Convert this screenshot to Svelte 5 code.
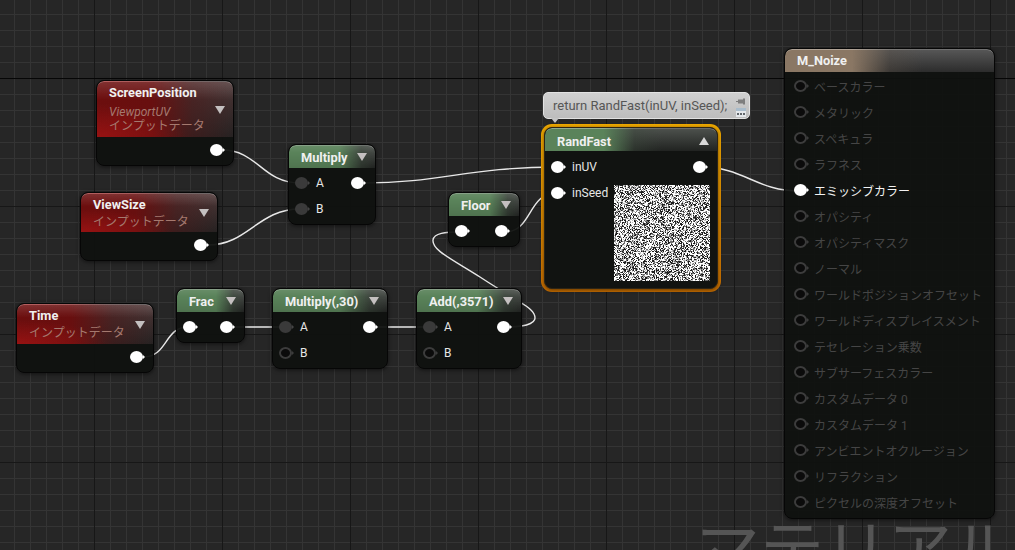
<script>
  import { onMount } from 'svelte';

  const inputData = 'インプットデータ';
  const nodes = [
    { title: 'ScreenPosition', kind: 'red', sub: ['ViewportUV'], note: inputData, x: 96, y: 80, w: 138, h: 86, head: 56, rows: [{ out: 'on' }] },
    { title: 'ViewSize', kind: 'red', note: inputData, x: 80, y: 192, w: 138, h: 69, head: 39, rows: [{ out: 'on' }] },
    { title: 'Time', kind: 'red', note: inputData, x: 16, y: 303, w: 138, h: 70, head: 40, rows: [{ out: 'on' }] },
    { title: 'Multiply', kind: 'green', x: 288, y: 144, w: 88, h: 81, head: 23, rows: [{ pin: 'dim', label: 'A', out: 'on' }, { pin: 'dim', label: 'B' }] },
    { title: 'Frac', kind: 'green', x: 176, y: 288, w: 69, h: 55, head: 23, rows: [{ pin: 'on', out: 'on' }] },
    { title: 'Multiply(,30)', kind: 'green', x: 272, y: 288, w: 116, h: 81, head: 23, rows: [{ pin: 'dim', label: 'A', out: 'on' }, { pin: 'off', label: 'B' }] },
    { title: 'Add(,3571)', kind: 'green', x: 416, y: 288, w: 106, h: 81, head: 23, rows: [{ pin: 'dim', label: 'A', out: 'on' }, { pin: 'off', label: 'B' }] },
    { title: 'Floor', kind: 'green', x: 448, y: 192, w: 72, h: 55, head: 23, rows: [{ pin: 'on', out: 'on' }] }
  ];

  const outputs = [
    'ベースカラー', 'メタリック', 'スペキュラ', 'ラフネス', 'エミッシブカラー', 'オパシティ',
    'オパシティマスク', 'ノーマル', 'ワールドポジションオフセット', 'ワールドディスプレイスメント',
    'テセレーション乗数', 'サブサーフェスカラー', 'カスタムデータ 0', 'カスタムデータ 1',
    'アンビエントオクルージョン', 'リフラクション', 'ピクセルの深度オフセット'
  ];

  const wires = [
    'M222 150 C258 150 262 183 300 183',
    'M208 245 C248 245 258 209 300 209',
    'M364 183 C440 183 470 167 556 167',
    'M143 357 C168 357 164 327 188 327',
    'M233 327 L285 327',
    'M376 327 L429 327',
    'M505 327 C530 327 538 322 534 314 C530 306 515 300 480 277 C450 258 432 250 433 240 C434 233 445 232 461 232',
    'M505 232 C532 232 528 193 556 193',
    'M700 167 C745 167 755 191 800 191'
  ];

  let noise;
  onMount(() => {
    const ctx = noise.getContext('2d');
    const img = ctx.createImageData(96, 96);
    let s = 1234567;
    const rnd = () => {
      s = (s + 0x6d2b79f5) | 0;
      let t = Math.imul(s ^ (s >>> 15), 1 | s);
      t = (t + Math.imul(t ^ (t >>> 7), 61 | t)) ^ t;
      return ((t ^ (t >>> 14)) >>> 0) / 4294967296;
    };
    for (let i = 0; i < img.data.length; i += 4) {
      const r = rnd();
      const v = r < 0.24 ? 30 : r < 0.44 ? 110 : r < 0.6 ? 190 : 255;
      img.data[i] = img.data[i + 1] = img.data[i + 2] = v;
      img.data[i + 3] = 255;
    }
    ctx.putImageData(img, 0, 0);
  });
</script>

{#snippet pin(state)}
  <span class="pin {state}"><i></i></span>
{/snippet}

<main class="graph">
  <svg class="wires" width="1015" height="550" viewBox="0 0 1015 550" aria-hidden="true">
    {#each wires as d}
      <path {d} />
    {/each}
  </svg>

  {#each nodes as n}
    <section class="node" style="left:{n.x}px;top:{n.y}px;width:{n.w}px;height:{n.h}px">
      <header class="head {n.kind}" style="height:{n.head}px">
        <div class="titles">
          <strong>{n.title}</strong>
          {#if n.sub}<em>{n.sub[0]}</em>{/if}
          {#if n.note}<span class="note">{n.note}</span>{/if}
        </div>
        <b class="arrow"></b>
      </header>
      <div class="body {n.kind}">
        {#each n.rows as r}
          <div class="row">
            <div class="in">
              {#if r.pin}{@render pin(r.pin)}{/if}
              {#if r.label}<span class="label">{r.label}</span>{/if}
            </div>
            {#if r.out}{@render pin(r.out)}{/if}
          </div>
        {/each}
      </div>
    </section>
  {/each}

  <div class="comment">
    <span>return RandFast(inUV, inSeed);</span>
    <svg class="cicons" width="10" height="24" viewBox="0 0 10 24" aria-hidden="true">
      <path d="M0 7H2V8H0Z M2 5.5H7V9.5H2Z M7 4.5H9V10.5H7Z" fill="#7e7e7e" />
      <rect x="0" y="14" width="10" height="9" fill="#e4e7ea" />
      <rect x="0" y="14" width="10" height="3" fill="#a9bccb" />
      <path d="M1 20H3M4 20H6M7 20H9" stroke="#62676b" stroke-width="2" />
    </svg>
    <b class="tail"></b>
  </div>

  <div class="selected">
    <section class="node inner">
      <header class="head green wide">
        <div class="titles"><strong>RandFast</strong></div>
        <b class="arrow up"></b>
      </header>
      <div class="body">
        <div class="row">
          <div class="in">{@render pin('on')}<span class="label">inUV</span></div>
          {@render pin('on')}
        </div>
        <div class="preview-row">
          <div class="in row">{@render pin('on')}<span class="label">inSeed</span></div>
          <canvas bind:this={noise} width="96" height="96"></canvas>
        </div>
      </div>
    </section>
  </div>

  <section class="node result">
    <header class="head tan">
      <div class="titles"><strong>M_Noize</strong></div>
    </header>
    <div class="body list">
      {#each outputs as o, i}
        <div class="row">
          <div class="in">
            {@render pin(i === 4 ? 'on' : 'off')}
            <span class="label jp" class:active={i === 4}>{o}</span>
          </div>
        </div>
      {/each}
    </div>
  </section>

  <div class="watermark">マテリアル</div>
</main>

<style>
  :global(body) {
    margin: 0;
  }
  .graph {
    position: relative;
    width: 1015px;
    height: 550px;
    overflow: hidden;
    font-family: Roboto, "Noto Sans CJK JP", sans-serif;
    background-color: #262626;
    background-image:
      linear-gradient(180deg, #060606 1px, transparent 1px),
      linear-gradient(90deg, #171717 1px, transparent 1px),
      linear-gradient(180deg, #171717 1px, transparent 1px),
      linear-gradient(90deg, #343434 1px, transparent 1px),
      linear-gradient(180deg, #343434 1px, transparent 1px);
    background-size: 100% 1px, 128px 128px, 128px 128px, 16px 16px, 16px 16px;
    background-position: 0 78px, 94px 0, 0 78px, 14px 0, 0 14px;
    background-repeat: no-repeat, repeat, repeat, repeat, repeat;
  }
  .wires {
    position: absolute;
    inset: 0;
  }
  .wires path {
    fill: none;
    stroke: #e8e8e8;
    stroke-width: 1.4;
  }
  .node {
    position: absolute;
    box-sizing: border-box;
    display: flex;
    flex-direction: column;
    border: 1px solid #060606;
    border-radius: 8px;
    background: rgba(15, 17, 15, 0.95);
    box-shadow: 0 1px 4px rgba(0, 0, 0, 0.55);
    overflow: hidden;
  }
  .head {
    flex: none;
    display: flex;
    align-items: center;
    justify-content: space-between;
    box-sizing: border-box;
    padding: 0 8px 0 12px;
    border-top: 1px solid rgba(255, 255, 255, 0.32);
    border-radius: 7px 7px 0 0;
    color: #f0f0f0;
  }
  .head.red {
    background:
      linear-gradient(180deg, rgba(255, 255, 255, 0.14) 0%, transparent 32%),
      radial-gradient(ellipse 65% 60% at 0% 100%, rgba(165, 20, 20, 0.75) 0%, transparent 100%),
      linear-gradient(90deg, #6c0e0e 0%, #680f0f 40%, rgba(80, 24, 24, 0.5) 70%, transparent 100%),
      linear-gradient(180deg, #4c3636, #262222);
  }
  .head.green {
    background:
      linear-gradient(180deg, rgba(255, 255, 255, 0.08) 0%, transparent 30%, rgba(0, 0, 0, 0.12) 100%),
      linear-gradient(90deg, #5a835a 0%, #5a835a 58%, rgba(60, 75, 60, 0.5) 84%, transparent 100%),
      linear-gradient(180deg, #505450, #242624);
  }
  .head.wide {
    background:
      linear-gradient(90deg, #5a835a 0%, #5a835a 34%, rgba(60, 75, 60, 0.35) 52%, transparent 68%),
      linear-gradient(180deg, #4c504c, #212321);
  }
  .head.tan {
    height: 23px;
    padding-bottom: 2px;
    background:
      linear-gradient(90deg, #8a7764 0%, #8a7764 32%, rgba(90, 80, 70, 0.35) 50%, transparent 66%),
      linear-gradient(180deg, #565656, #2c2c2c);
  }
  .titles {
    display: flex;
    flex-direction: column;
    white-space: nowrap;
  }
  .red .titles {
    gap: 3px;
    padding-bottom: 1px;
  }
  strong {
    font-size: 12.8px;
    font-weight: 700;
    line-height: 15px;
  }
  em {
    margin-top: 2px;
    margin-bottom: -3px;
    font-size: 12px;
    line-height: 14px;
    color: #a5796f;
  }
  .note {
    font-size: 12px;
    line-height: 14px;
    color: #a5796f;
  }
  .arrow {
    flex: none;
    width: 0;
    height: 0;
    border-left: 5.5px solid transparent;
    border-right: 5.5px solid transparent;
    border-top: 8px solid #c4c0c0;
  }
  .arrow.up {
    border-top: 0;
    border-bottom: 8px solid #d8d8d8;
  }
  .body {
    flex: 1;
    padding: 2px 8px 0 7px;
  }
  .body.red {
    padding: 0 7px 0 7px;
  }
  .row {
    display: flex;
    align-items: center;
    justify-content: space-between;
    height: 26px;
  }
  .body.red .row {
    justify-content: flex-end;
  }
  .in {
    display: flex;
    align-items: center;
    gap: 5px;
  }
  .label {
    font-size: 12px;
    color: #e6e6e6;
    white-space: nowrap;
  }
  .pin {
    position: relative;
    flex: none;
    box-sizing: border-box;
    width: 13px;
    height: 12px;
    margin: 0 3px 0 -1px;
    border-radius: 50%;
  }
  .pin i {
    position: absolute;
    left: 100%;
    top: 50%;
    margin-top: -2.5px;
    border-top: 2.5px solid transparent;
    border-bottom: 2.5px solid transparent;
    border-left: 2.5px solid currentColor;
  }
  .pin.on {
    background: #fff;
    color: #fff;
  }
  .pin.dim {
    background: #3a3a3a;
    color: #454545;
  }
  .pin.off {
    background: #0b0b0b;
    border: 2px solid #3c3c3c;
    color: #3c3c3c;
  }
  .pin.off i {
    left: calc(100% + 2px);
  }
  .selected {
    position: absolute;
    box-sizing: border-box;
    left: 541px;
    top: 124px;
    width: 180px;
    height: 168px;
    padding: 3px;
    border-radius: 11px;
    background: linear-gradient(180deg, #f2ab00, #c86e00);
  }
  .node.inner {
    position: relative;
    width: 100%;
    height: 100%;
    background: #111311;
    border-color: #2d2415;
  }
  .node.inner .head {
    height: 23px;
    padding: 2px 8px 0 12px;
  }
  .node.inner .body {
    padding-top: 3px;
  }
  .preview-row {
    display: flex;
    justify-content: space-between;
    margin-right: -1px;
  }
  canvas {
    display: block;
    width: 96px;
    height: 96px;
    margin-top: 5px;
  }
  .comment {
    position: absolute;
    box-sizing: border-box;
    left: 543px;
    top: 92px;
    width: 207px;
    height: 27px;
    display: flex;
    align-items: center;
    justify-content: space-between;
    padding: 0 3px 0 9px;
    border-radius: 5px;
    background: linear-gradient(180deg, #d0d0d0, #bdbdbd);
    border: 1px solid #e2e2e2;
    color: #565656;
    font-size: 13px;
  }
  .tail {
    position: absolute;
    left: 7px;
    top: 100%;
    border-left: 4px solid transparent;
    border-right: 4px solid transparent;
    border-top: 5px solid #c4c4c4;
  }
  .result {
    left: 784px;
    top: 48px;
    width: 211px;
    height: 471px;
    background: rgba(15, 17, 15, 0.93);
  }
  .list {
    padding: 1px 0 0 10px;
  }
  .label.jp {
    color: #454545;
    font-size: 12px;
    margin-left: -1px;
  }
  .label.jp.active {
    color: #f2f2f2;
  }
  .watermark {
    position: absolute;
    left: 696px;
    top: 520px;
    font-family: "Noto Sans CJK JP", sans-serif;
    font-size: 64px;
    line-height: 0.8;
    white-space: nowrap;
    color: #555555;
  }
</style>
